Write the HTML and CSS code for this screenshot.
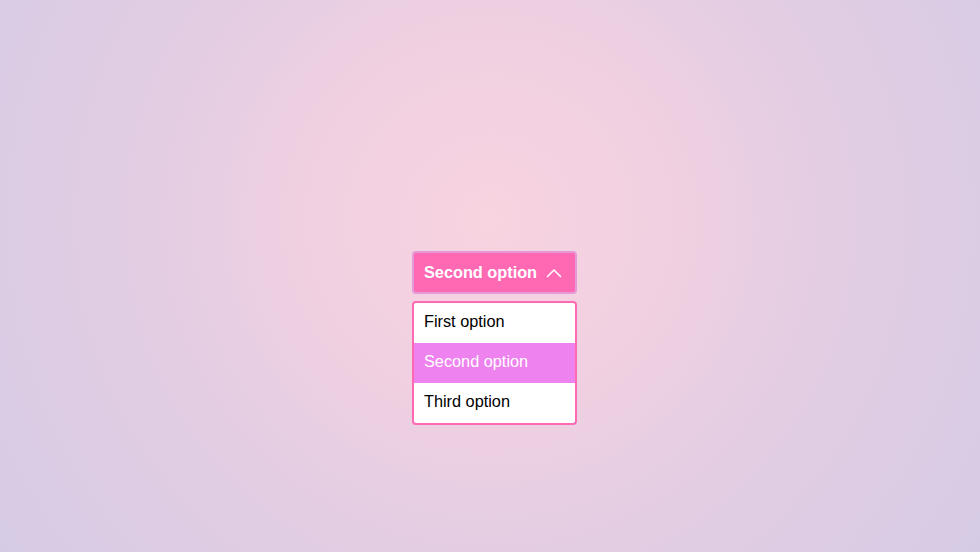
FILE: index.html
```html
<!DOCTYPE html>
<html lang="en">
<head>
  <meta charset="UTF-8" />
  <meta name="viewport" content="width=device-width, initial-scale=1.0" />
  <title>Dropdown</title>
  <link rel="stylesheet" href="styles.css">
</head>
<body>

  <div class="dropdown">
    <button class="dropdown-toggle" type="button">
      <span>Second option</span>
      <svg class="chevron" width="16" height="10" viewBox="0 0 16 10" fill="none">
        <path d="M1.5 8.5 L8 2 L14.5 8.5" stroke="#fff" stroke-width="1.6" stroke-linecap="round" stroke-linejoin="round"/>
      </svg>
    </button>

    <ul class="dropdown-menu">
      <li>First option</li>
      <li class="active">Second option</li>
      <li>Third option</li>
    </ul>
  </div>

</body>
</html>
```

FILE: styles.css
```css
html, body {
  height: 100%;
}

body {
  margin: 0;
  font-family: 'Liberation Sans', Arial, sans-serif;
  background: radial-gradient(circle at 50% 40%, #f8d3e0 0%, #f0d0e1 30%, #e2cde3 60%, #d6cbe5 100%);
  display: flex;
  justify-content: center;
  align-items: flex-start;
}

.dropdown {
  margin-top: 251px;
  margin-left: 9px;
  width: 165px;
}

.dropdown-toggle {
  width: 100%;
  height: 43px;
  display: flex;
  align-items: center;
  justify-content: space-between;
  padding: 0 13px 0 10px;
  background: #ff69b4;
  border: 2px solid #e59ad8;
  border-radius: 4px;
  color: #fff;
  font-family: inherit;
  font-size: 16.3px;
  font-weight: 700;
  cursor: pointer;
  box-sizing: border-box;
}

.chevron {
  display: block;
}

.dropdown-menu {
  list-style: none;
  margin: 7px 0 0;
  padding: 0;
  background: #fff;
  border: 2px solid #ff69b4;
  border-radius: 4px;
  overflow: hidden;
}

.dropdown-menu li {
  height: 40px;
  line-height: 37px;
  padding: 0 10px 3px;
  box-sizing: border-box;
  font-size: 16.3px;
  color: #000;
}

.dropdown-menu li.active {
  background: #ee82ee;
  color: #fff;
}
```
